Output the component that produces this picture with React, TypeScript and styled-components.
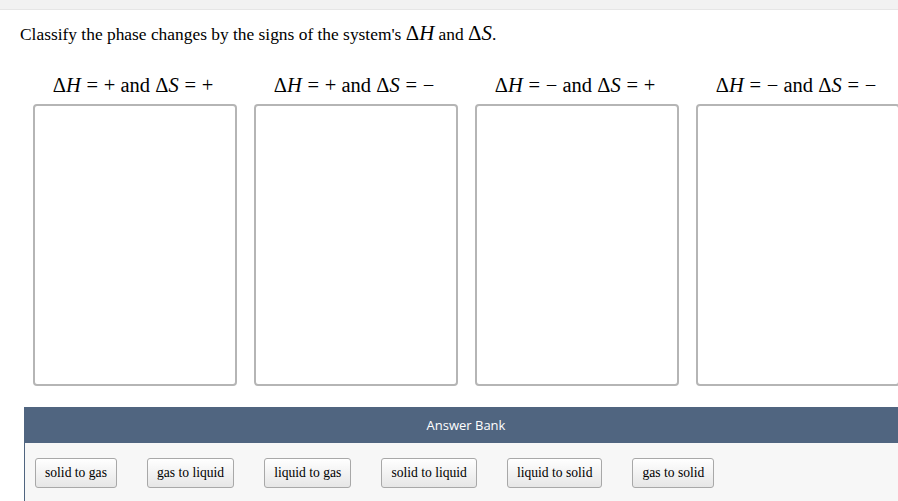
import React from "react";
import styled, { createGlobalStyle } from "styled-components";

const Global = createGlobalStyle`
  html, body { margin: 0; padding: 0; background: #fff; overflow: hidden; }
  body { font-family: "Liberation Serif", "Times New Roman", serif; color: #000; }
`;

const Page = styled.div`
  width: 940px;
`;

const TopBar = styled.div`
  height: 9px;
  background: #f2f2f2;
  border-bottom: 1px solid #e6e6e6;
`;

const Title = styled.p`
  margin: 12px 0 0 20px;
  font-size: 17.4px;
  line-height: 24px;
`;

const Math = styled.span`
  font-size: 1.2em;
  line-height: 1;
`;

const Columns = styled.div`
  display: grid;
  grid-template-columns: repeat(4, 204px);
  column-gap: 17px;
  margin: 27px 0 0 33px;
`;

const Column = styled.div`
  display: flex;
  flex-direction: column;
  align-items: stretch;
`;

const Heading = styled.div`
  height: 24px;
  text-align: center;
  font-size: 20.5px;
  line-height: 24px;
  white-space: nowrap;
  margin-bottom: 7px;
  padding-right: 4px;
`;

const Var = styled.i`
  font-style: italic;
`;

const Op = styled.span`
  margin: 0 0.28em;
`;

const DropBox = styled.div`
  height: 278px;
  border: 2px solid #b5b5b5;
  border-radius: 4px;
  background: #fff;
`;

const Bank = styled.div`
  margin: 21px 0 0 24px;
  width: 884px;
`;

const BankHeader = styled.div`
  height: 36px;
  background: #506580;
  color: #fff;
  font-family: "Open Sans", "Liberation Sans", sans-serif;
  font-size: 13px;
  display: flex;
  align-items: center;
  justify-content: center;
`;

const BankBody = styled.div`
  background: #f7f7f7;
  border-left: 1px solid #506580;
  display: flex;
  gap: 30px;
  padding: 15px 10px 20px 10px;
`;

const Chip = styled.div`
  height: 28px;
  padding: 0 9px;
  border: 1px solid #a8a8a8;
  border-radius: 3px;
  background: linear-gradient(#ffffff, #e6e6e6);
  font-size: 13.6px;
  line-height: 28px;
  white-space: nowrap;
`;

const Eq = ({ h, s }: { h: string; s: string }) => (
  <>
    Δ<Var>H</Var>
    <Op>=</Op>
    {h} and Δ<Var>S</Var>
    <Op>=</Op>
    {s}
  </>
);

const cats = [
  { h: "+", s: "+" },
  { h: "+", s: "−" },
  { h: "−", s: "+" },
  { h: "−", s: "−" },
];

const answers = [
  "solid to gas",
  "gas to liquid",
  "liquid to gas",
  "solid to liquid",
  "liquid to solid",
  "gas to solid",
];

export default function App() {
  return (
    <Page>
      <Global />
      <TopBar />
      <Title>
        Classify the phase changes by the signs of the system's{" "}
        <Math>
          Δ<Var>H</Var>
        </Math>{" "}
        and{" "}
        <Math>
          Δ<Var>S</Var>
        </Math>
        .
      </Title>
      <Columns>
        {cats.map((c, i) => (
          <Column key={i}>
            <Heading>
              <Eq h={c.h} s={c.s} />
            </Heading>
            <DropBox />
          </Column>
        ))}
      </Columns>
      <Bank>
        <BankHeader>Answer Bank</BankHeader>
        <BankBody>
          {answers.map((a) => (
            <Chip key={a}>{a}</Chip>
          ))}
        </BankBody>
      </Bank>
    </Page>
  );
}
